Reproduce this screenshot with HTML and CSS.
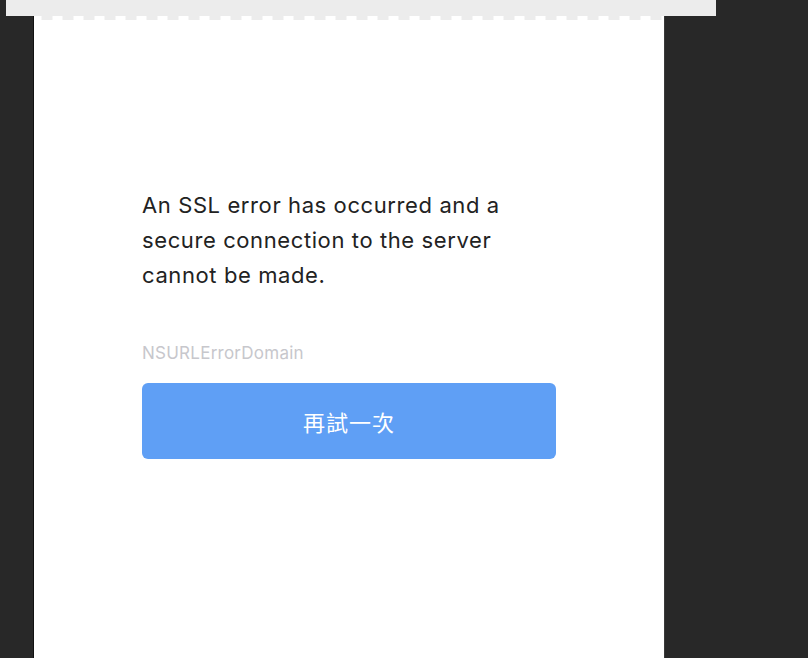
FILE: index.html
```html
<!DOCTYPE html>
<html lang="en">
<head>
  <meta charset="UTF-8" />
  <meta name="viewport" content="width=device-width, initial-scale=1.0"/>
  <title>SSL Error</title>
  <link rel="stylesheet" href="styles.css">
</head>
<body>

  <div class="topbar"></div>

  <div class="sheet">
    <div class="teeth"></div>

    <div class="error-box">
      <p class="message">An SSL error has occurred and a secure connection to the server cannot be made.</p>
      <p class="domain">NSURLErrorDomain</p>
      <button class="retry">再試一次</button>
    </div>
  </div>

</body>
</html>
```

FILE: styles.css
```css
* {
  box-sizing: border-box;
  margin: 0;
  padding: 0;
}

html, body {
  height: 100%;
  overflow: hidden;
}

body {
  background: #282828;
  font-family: Inter, "Noto Sans", sans-serif;
}

.topbar {
  width: 710px;
  height: 16px;
  margin-left: 6px;
  background: #ececec;
}

.sheet {
  width: 632px;
  height: 642px;
  margin-left: 33px;
  background: #fff;
  border-left: 1px solid #111;
  border-right: 1px solid #3a3a3a;
}

/* the torn strip under the grey bar */
.teeth {
  height: 4px;
  background: repeating-linear-gradient(90deg,
    #fff 0, #fff 7px,
    #ececec 8px, #ececec 18px,
    #fff 19px, #fff 21px);
}

.error-box {
  width: 414px;
  margin-left: 108px;
  padding-top: 168px;
}

.message {
  font-size: 22px;
  line-height: 35px;
  color: #222;
  letter-spacing: 0.6px;
}

.domain {
  margin-top: 50px;
  font-size: 17px;
  line-height: 20px;
  color: #c7c7cc;
  letter-spacing: 0.25px;
}

.retry {
  display: block;
  width: 414px;
  height: 76px;
  margin-top: 20px;
  border: none;
  border-radius: 6px;
  background: #5f9ff5;
  color: #fff;
  font-family: "Noto Sans CJK TC", sans-serif;
  font-size: 22px;
  letter-spacing: 1px;
}
```
